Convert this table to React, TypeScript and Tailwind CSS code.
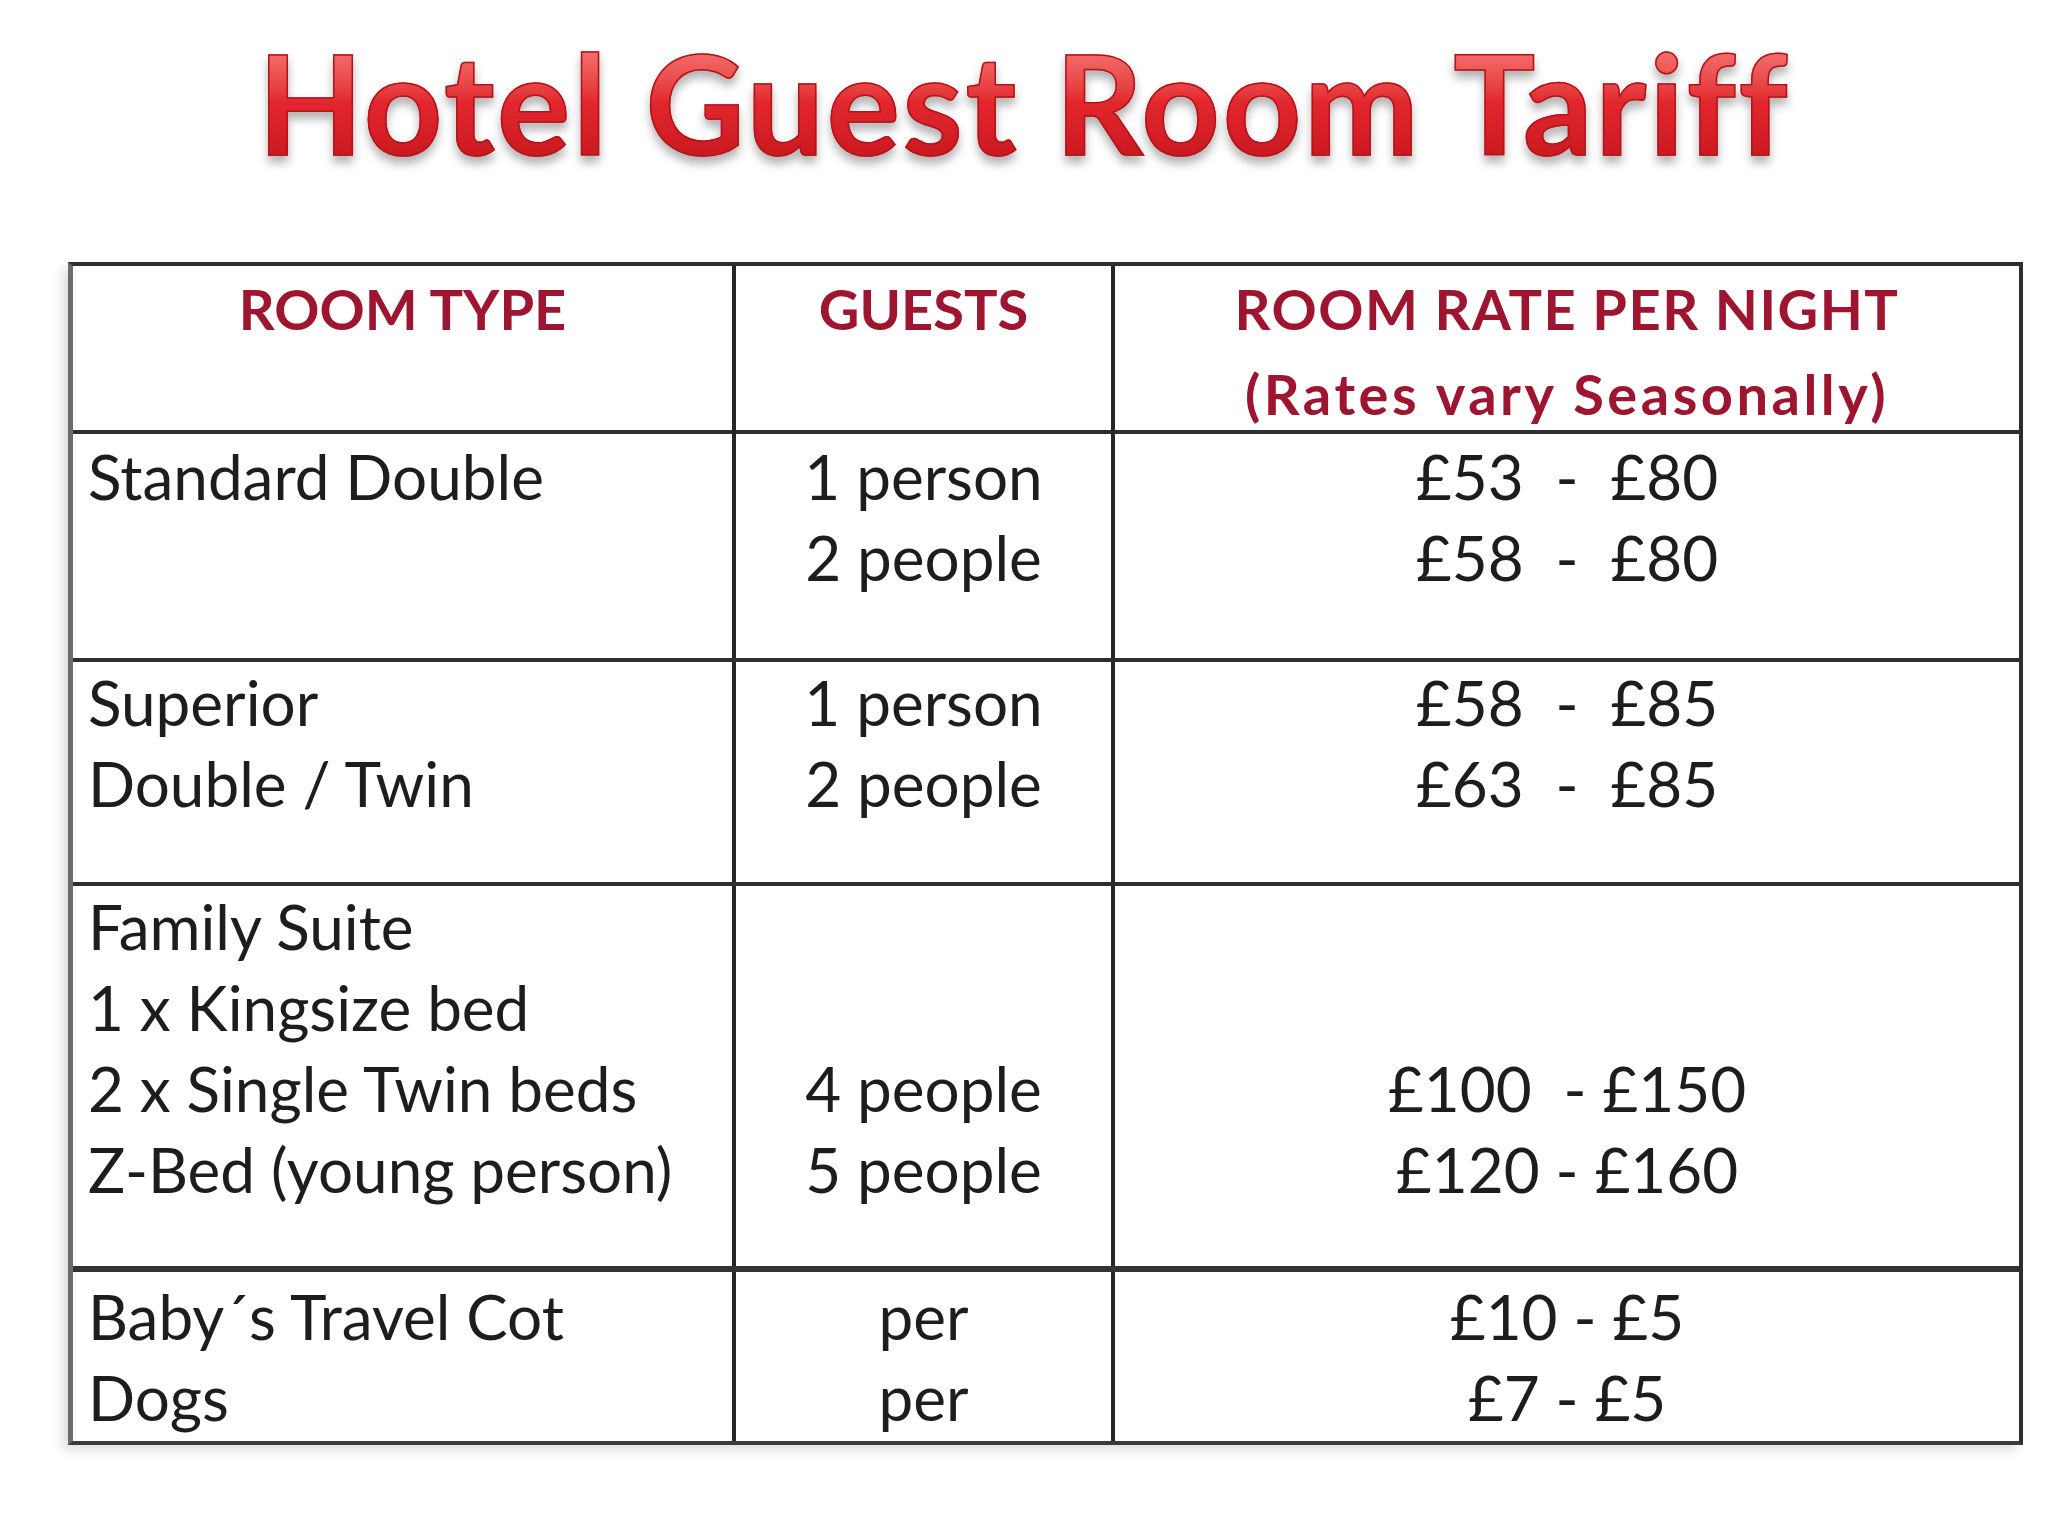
import React from 'react';

type RowProps = {
  className: string;
  children: React.ReactNode;
};

function Row({ className, children }: RowProps) {
  return <div className={`grid grid-cols-[663px_379px_1fr] ${className}`}>{children}</div>;
}

const bodyText = "text-[62px] leading-[81px] text-[#1d1d1d]";
const headText = "text-center text-[56px] leading-[85px] font-bold text-[#9e1530]";

export default function App() {
  return (
    <div className="w-[2048px] h-[1536px] bg-white font-['Lato',sans-serif]">
      {/* title */}
      <div className="flex justify-center pt-[34px]">
        <h1 className="w-fit text-[137px] leading-none font-bold tracking-[2.7px] text-transparent bg-clip-text bg-linear-to-b from-[#f58080] via-[#e3262d] to-[#c4151c] [-webkit-text-stroke:1.5px_#b3141c] drop-shadow-[0_7px_5px_rgba(0,0,0,0.3)]">
          Hotel Guest Room Tariff
        </h1>
      </div>

      {/* tariff table */}
      <div className="ml-[68px] mt-[91px] w-[1955px] border-t-4 border-r-4 border-b-4 border-l-[5px] border-t-[#2e2e2e] border-r-[#2e2e2e] border-b-[#3a3a3a] border-l-[#6b6b6b] shadow-[-6px_6px_10px_rgba(0,0,0,0.12)]">
        <Row className="h-[168px] border-b-4 border-[#2e2e2e]">
          <div className={`border-r-4 border-[#262626] ${headText}`}>ROOM TYPE</div>
          <div className={`border-r-4 border-[#262626] ${headText}`}>GUESTS</div>
          <div className={headText}>
            <div className="tracking-[1.5px]">ROOM RATE PER NIGHT</div>
            <div className="tracking-[3.5px]">(Rates vary Seasonally)</div>
          </div>
        </Row>

        <Row className="h-[228px] border-b-4 border-[#2e2e2e]">
          <div className={`border-r-4 border-[#262626] pl-[15px] pt-[2px] ${bodyText}`}>
            Standard Double
          </div>
          <div className={`border-r-4 border-[#262626] text-center pt-[2px] ${bodyText}`}>
            <div>1 person</div>
            <div>2 people</div>
          </div>
          <div className={`text-center pt-[2px] whitespace-pre ${bodyText}`}>
            <div>£53  -  £80</div>
            <div>£58  -  £80</div>
          </div>
        </Row>

        <Row className="h-[224px] border-b-4 border-[#2e2e2e]">
          <div className={`border-r-4 border-[#262626] pl-[15px] ${bodyText}`}>
            <div>Superior</div>
            <div>Double / Twin</div>
          </div>
          <div className={`border-r-4 border-[#262626] text-center ${bodyText}`}>
            <div>1 person</div>
            <div>2 people</div>
          </div>
          <div className={`text-center whitespace-pre ${bodyText}`}>
            <div>£58  -  £85</div>
            <div>£63  -  £85</div>
          </div>
        </Row>

        <Row className="h-[386px] border-b-[6px] border-[#333]">
          <div className={`border-r-4 border-[#262626] pl-[15px] ${bodyText}`}>
            <div>Family Suite</div>
            <div>1 x Kingsize bed</div>
            <div>2 x Single Twin beds</div>
            <div>Z-Bed (young person)</div>
          </div>
          <div className={`border-r-4 border-[#262626] text-center pt-[162px] ${bodyText}`}>
            <div>4 people</div>
            <div>5 people</div>
          </div>
          <div className={`text-center pt-[162px] whitespace-pre ${bodyText}`}>
            <div>£100  - £150</div>
            <div>£120 - £160</div>
          </div>
        </Row>

        <Row className="h-[169px]">
          <div className={`border-r-4 border-[#262626] pl-[15px] pt-[4px] ${bodyText}`}>
            <div>Baby´s Travel Cot</div>
            <div>Dogs</div>
          </div>
          <div className={`border-r-4 border-[#262626] text-center pt-[4px] ${bodyText}`}>
            <div>per</div>
            <div>per</div>
          </div>
          <div className={`text-center pt-[4px] ${bodyText}`}>
            <div>£10 - £5</div>
            <div>£7 - £5</div>
          </div>
        </Row>
      </div>
    </div>
  );
}
